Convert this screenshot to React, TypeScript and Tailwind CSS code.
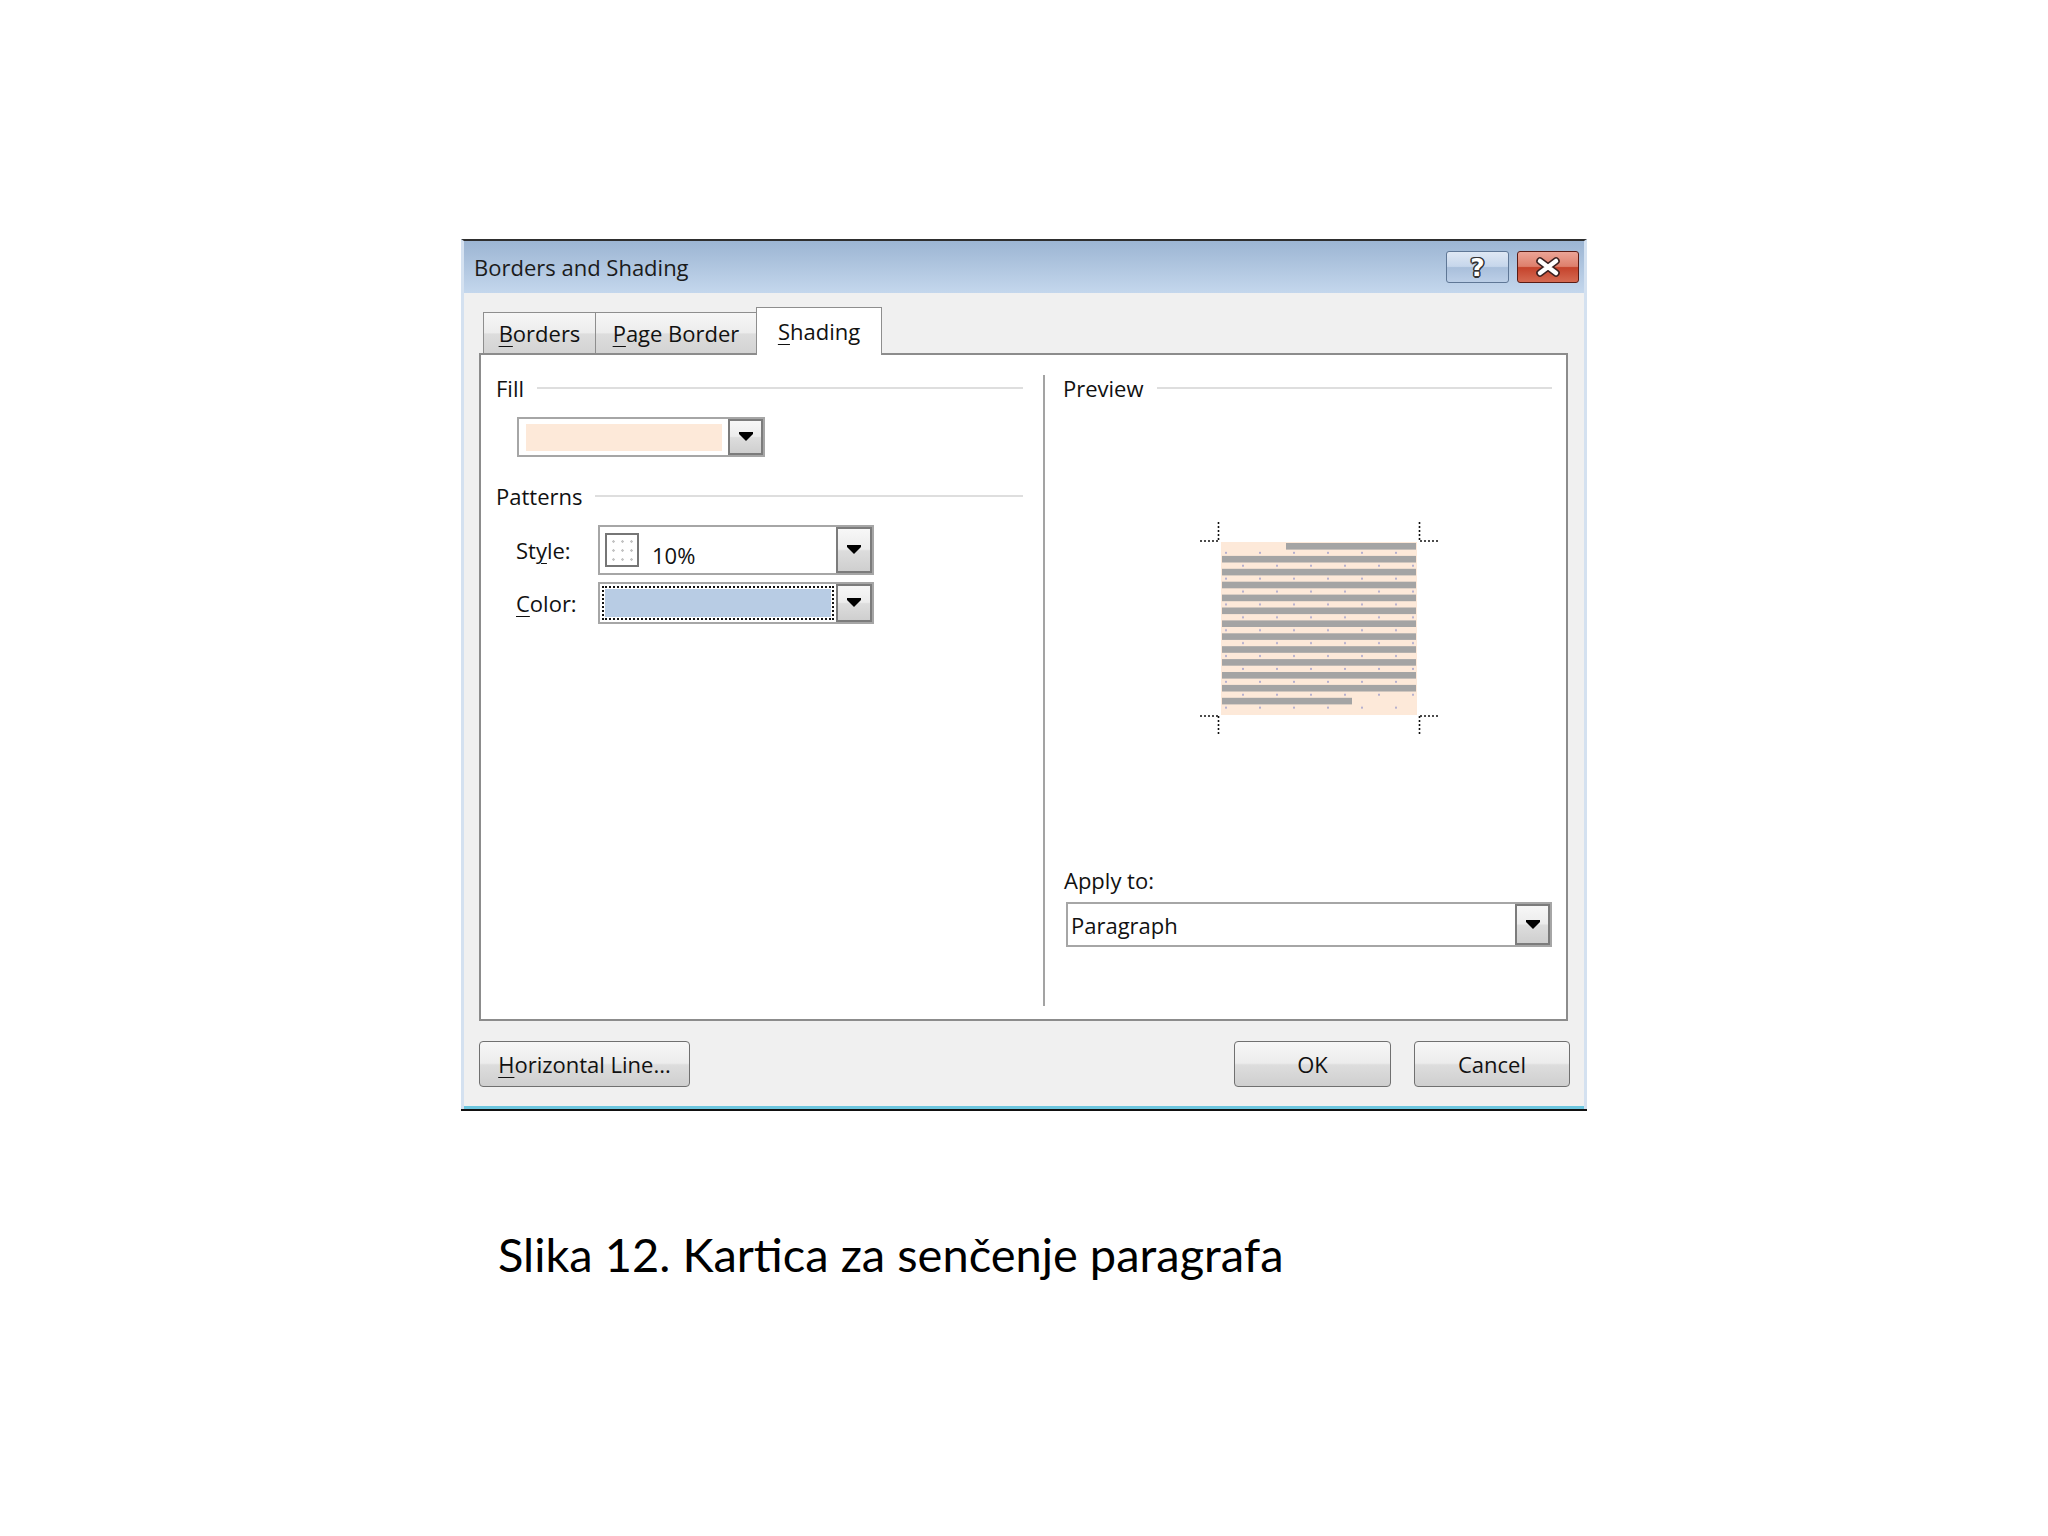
import React from "react";

const btnGrad =
  "bg-[linear-gradient(to_bottom,#f7f7f7_0%,#ececec_48%,#dddddd_52%,#cfcfcf_100%)]";

function Arrow() {
  return (
    <svg width="16" height="10" viewBox="0 0 16 10">
      <path d="M1 0 H15 V2 L8 9 L1 2 Z" fill="#000" />
    </svg>
  );
}

function DropBtn({ w = "w-[36px]" }: { w?: string }) {
  return (
    <div
      className={`${w} self-stretch border-2 border-[#7c7c7c] ${btnGrad} flex items-center justify-center`}
    >
      <Arrow />
    </div>
  );
}

function U({ children }: { children: React.ReactNode }) {
  return <span className="underline underline-offset-[4px] decoration-1">{children}</span>;
}

function PreviewArt() {
  const bars = Array.from({ length: 13 }, (_, i) => i);
  return (
    <svg width="240" height="215" viewBox="0 0 240 215">
      <defs>
        <pattern id="dots" width="34" height="25.8" patternUnits="userSpaceOnUse" x="21" y="21">
          <circle cx="5" cy="9.8" r="1" fill="#aaa6cc" />
          <circle cx="22" cy="22.7" r="1" fill="#aaa6cc" />
        </pattern>
      </defs>
      <rect x="21" y="20" width="196" height="173" fill="#fde9d9" />
      <rect x="21" y="20" width="196" height="173" fill="url(#dots)" />
      {bars.map((i) => {
        const y = 21 + i * 12.9;
        const x1 = i === 0 ? 86 : 22;
        const x2 = i === 12 ? 152 : 216;
        return <rect key={i} x={x1} y={y} width={x2 - x1} height="6.6" fill="#a4a4a4" />;
      })}
      <g stroke="#111" strokeWidth="1.6" strokeDasharray="2 2" fill="none">
        <line x1="18.5" y1="0" x2="18.5" y2="19" />
        <line x1="0" y1="19" x2="18" y2="19" />
        <line x1="219.5" y1="0" x2="219.5" y2="19" />
        <line x1="220" y1="19" x2="238" y2="19" />
        <line x1="0" y1="194" x2="18" y2="194" />
        <line x1="18.5" y1="194" x2="18.5" y2="212" />
        <line x1="220" y1="194" x2="238" y2="194" />
        <line x1="219.5" y1="194" x2="219.5" y2="212" />
      </g>
    </svg>
  );
}

function SectionHead({ label, gap = "ml-[13px]" }: { label: string; gap?: string }) {
  return (
    <div className="flex items-center h-[30px] leading-[30px]">
      <span>{label}</span>
      <div className={`flex-1 h-[2px] bg-[#dedede] ${gap}`} />
    </div>
  );
}

export default function App() {
  return (
    <div className="w-[2048px] h-[1536px] bg-white pt-[239px] pl-[461px] overflow-hidden">
      <div className="w-[1126px] flex flex-col border-t-2 border-t-[#2e2e2e] border-x-[3px] border-x-[#d4e1f0] bg-[#f0f0f0] text-[22px] text-[#111] font-['Open_Sans',sans-serif]">
        {/* Title bar */}
        <div className="h-[52px] flex items-center justify-between pl-[10px] pr-[5px] bg-[linear-gradient(to_bottom,#9cb5d3,#c4d7ed)]">
          <span className="text-[#1b1b1b] leading-none">Borders and Shading</span>
          <div className="flex items-center gap-[8px]">
            <div className="w-[63px] h-[32px] rounded-[3px] border border-[#5f7796] bg-[linear-gradient(to_bottom,#dfe8f4_0%,#c6d6eb_48%,#a9bfdb_52%,#bccfe7_100%)] flex items-center justify-center">
              <span className="font-['DejaVu_Sans',sans-serif] font-bold text-[25px] leading-none text-white [text-shadow:1.5px_0_0_#333,-1.5px_0_0_#333,0_1.5px_0_#333,0_-1.5px_0_#333,1px_1px_0_#333,-1px_-1px_0_#333,1px_-1px_0_#333,-1px_1px_0_#333]">
                ?
              </span>
            </div>
            <div className="w-[62px] h-[32px] rounded-[3px] border border-[#5a1b14] bg-[linear-gradient(to_bottom,#eba496_0%,#de7f6c_48%,#c5432c_52%,#d56a52_100%)] flex items-center justify-center">
              <svg width="28" height="20" viewBox="0 0 28 20">
                <path d="M6 4 L22 16 M22 4 L6 16" stroke="#3a2020" strokeWidth="7.5" strokeLinecap="round" />
                <path d="M6 4 L22 16 M22 4 L6 16" stroke="#ffffff" strokeWidth="4.5" strokeLinecap="round" />
              </svg>
            </div>
          </div>
        </div>

        {/* Body */}
        <div className="flex flex-col pt-[14px] pb-[19px]">
          {/* Tabs */}
          <div className="flex items-end h-[48px] -mb-[2px] ml-[19px] relative z-10">
            <div className="w-[113px] h-[41px] mb-[2px] border border-b-0 border-[#8e8e8e] bg-[linear-gradient(to_bottom,#f6f6f6_0%,#ececec_50%,#dddddd_52%,#d3d3d3_100%)] flex items-center justify-center leading-none">
              <span><U>B</U>orders</span>
            </div>
            <div className="w-[161px] h-[41px] mb-[2px] border border-b-0 border-l-0 border-[#8e8e8e] bg-[linear-gradient(to_bottom,#f6f6f6_0%,#ececec_50%,#dddddd_52%,#d3d3d3_100%)] flex items-center justify-center leading-none">
              <span><U>P</U>age Border</span>
            </div>
            <div className="w-[126px] h-[48px] -ml-px border border-b-0 border-[#8e8e8e] bg-white flex items-start justify-center pt-[12px] leading-none">
              <span><U>S</U>hading</span>
            </div>
          </div>

          {/* Panel */}
          <div className="w-[1089px] h-[668px] ml-[15px] border-2 border-[#8c8c8c] bg-white flex">
            {/* Left */}
            <div className="w-[562px] pt-[18px] pl-[15px] pr-[20px] flex flex-col">
              <SectionHead label="Fill" />
              <div className="mt-[14px] ml-[21px] w-[248px] h-[40px] flex border-2 border-[#a6a6a6] bg-white">
                <div className="flex-1 pl-[7px] pt-[5px] pr-[6px]">
                  <div className="h-[27px] bg-[#fde9d9]" />
                </div>
                <DropBtn w="w-[35px]" />
              </div>

              <div className="mt-[24px]">
                <SectionHead label="Patterns" />
              </div>

              <div className="mt-[14px] pl-[20px] flex items-center">
                <span className="w-[82px] leading-[30px]">
                  St<U>y</U>le:
                </span>
                <div className="w-[276px] h-[50px] flex border-2 border-[#a6a6a6] bg-white">
                  <div className="flex-1 flex items-center pl-[5px]">
                    <div className="w-[34px] h-[34px] border-2 border-[#767676] bg-white bg-[radial-gradient(circle,#c4c4c4_1px,transparent_1.5px)] bg-[length:9px_9px] bg-[position:2px_2px]" />
                    <span className="ml-[13px] mt-[10px] leading-none">10%</span>
                  </div>
                  <DropBtn />
                </div>
              </div>

              <div className="mt-[7px] pl-[20px] flex items-center">
                <span className="w-[82px] leading-[30px]">
                  <U>C</U>olor:
                </span>
                <div className="w-[276px] h-[42px] flex border-2 border-[#a6a6a6] bg-white">
                  <div className="flex-1 p-[2px]">
                    <div className="h-full border-2 border-dotted border-[#111] p-[1px]">
                      <div className="h-full bg-[#b8cce4]" />
                    </div>
                  </div>
                  <DropBtn />
                </div>
              </div>
            </div>

            {/* Divider */}
            <div className="w-[2px] mt-[20px] mb-[13px] bg-[#a3a3a3]" />

            {/* Right */}
            <div className="flex-1 pt-[18px] pl-[18px] pr-[14px] flex flex-col">
              <SectionHead label="Preview" />
              <div className="mt-[119px] ml-[137px]">
                <PreviewArt />
              </div>
              <span className="mt-[128px] ml-[1px] leading-[30px]">Apply to:</span>
              <div className="mt-[7px] ml-[3px] w-[486px] h-[45px] flex border-2 border-[#a6a6a6] bg-white">
                <div className="flex-1 flex items-center pl-[3px] leading-none">Paragraph</div>
                <DropBtn w="w-[35px]" />
              </div>
            </div>
          </div>

          {/* Buttons */}
          <div className="mt-[20px] ml-[15px] mr-[14px] flex items-center">
            <div className={`w-[211px] h-[46px] rounded-[4px] border border-[#707070] ${btnGrad} flex items-center justify-center leading-none`}>
              <span><U>H</U>orizontal Line...</span>
            </div>
            <div className="flex-1" />
            <div className={`w-[157px] h-[46px] rounded-[4px] border border-[#707070] ${btnGrad} flex items-center justify-center leading-none`}>
              OK
            </div>
            <div className={`w-[156px] h-[46px] ml-[23px] rounded-[4px] border border-[#707070] ${btnGrad} flex items-center justify-center leading-none`}>
              Cancel
            </div>
          </div>
        </div>

        <div className="h-[3px] bg-[#6cc6df]" />
        <div className="h-[2px] -mx-[3px] bg-[#111]" />
      </div>

      <p className="mt-[114px] ml-[37px] text-[47px] leading-[58px] text-black font-['Lato',sans-serif]">
        Slika 12. Kartica za senčenje paragrafa
      </p>
    </div>
  );
}
